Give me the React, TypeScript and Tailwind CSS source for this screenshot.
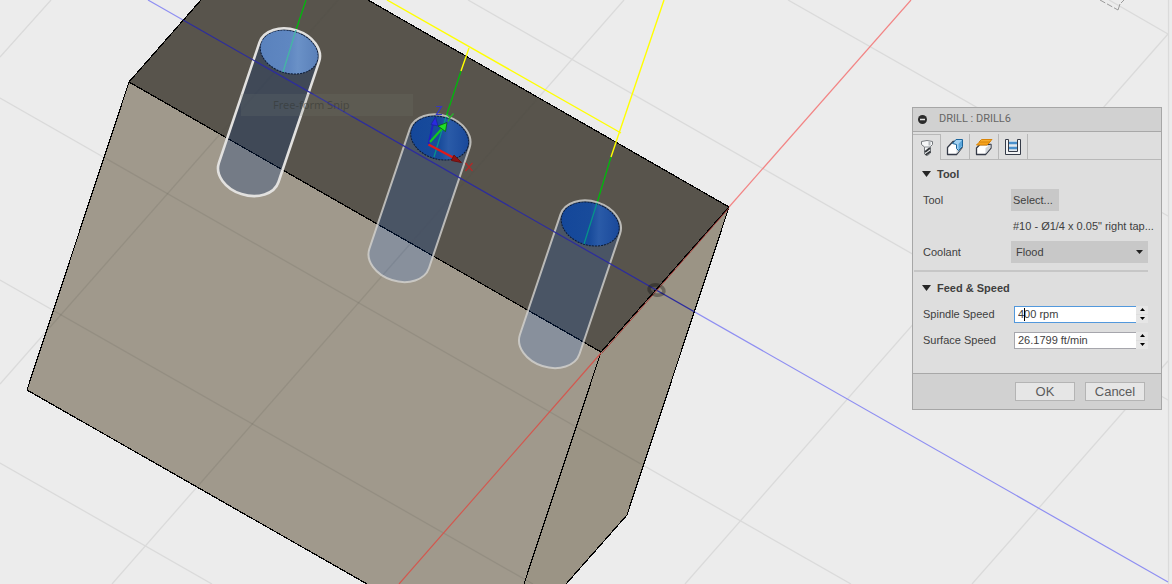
import React, { useState } from 'react';

const cylinderPath = 'M259.5 42.4A31.3 22.8 17 0 1 319.1 61.6L278.5 182A31.3 22.8 17 0 1 218.9 162.8Z';

const gridLines = [
  'M0 98L851 584',
  'M0 280L533 584',
  'M0 463L212 584',
  'M468 0L1168 400',
  'M788 0L1168 216',
  'M1109 0L1168 34',
  'M51 0L0 57',
  'M338 0L0 384',
  'M624 0L112 584',
  'M1168 34L685 584',
  'M1168 361L972 584',
];

const Cylinder: React.FC<{ x: number; y: number; active?: boolean }> = ({ x, y, active }) => (
  <g transform={`translate(${x} ${y})`}>
    <path d={cylinderPath} fill={active ? '#002e75' : '#005df5'} fillOpacity={active ? 0.27 : 0.15} />
    <ellipse
      cx="289.2"
      cy="52"
      rx="29.6"
      ry="21.2"
      transform="rotate(17 289.2 52)"
      fill={active ? 'url(#capActive)' : 'url(#cap)'}
      stroke="#0a1a38"
      strokeDasharray="2 1"
    />
    <path
      d={cylinderPath}
      fill="none"
      stroke={active ? '#e2e1df' : '#d5d3d0'}
      strokeOpacity={active ? 1 : 0.8}
      strokeWidth={active ? 2.6 : 2}
    />
  </g>
);

const Viewport: React.FC = () => (
  <svg
    className="absolute inset-0 h-full w-full"
    viewBox="0 0 1172 584"
    preserveAspectRatio="xMinYMin slice"
    aria-hidden="true"
  >
    <defs>
      <linearGradient id="cap" x1="0" y1="0.6" x2="1" y2="0.4">
        <stop offset="0" stopColor="#14479a" />
        <stop offset="0.5" stopColor="#184b9b" />
        <stop offset="0.65" stopColor="#2a5ba8" />
        <stop offset="1" stopColor="#19489a" />
      </linearGradient>
      <linearGradient id="capActive" x1="0" y1="0.6" x2="1" y2="0.4">
        <stop offset="0" stopColor="#5a82bd" />
        <stop offset="0.5" stopColor="#5f87c1" />
        <stop offset="0.65" stopColor="#6a91c7" />
        <stop offset="1" stopColor="#597fb8" />
      </linearGradient>
      <clipPath id="body">
        <path d="M201 0L129 82L27 390L367 584H566L627 515L729 207L368 0Z" />
      </clipPath>
    </defs>

    {/* Ground grid */}
    <g stroke="#dadada" strokeWidth="1.3" fill="none">
      {gridLines.map(d => <path key={d} d={d} />)}
      <path d="M1168.5 0V584" />
    </g>
    <path d="M148 0L1168 582" stroke="#8e8ef2" strokeWidth="1.2" />
    <path d="M911 0L729 207" stroke="#f28484" strokeWidth="1.2" />
    <g fill="none" stroke="#9a9a9a">
      <path d="M1100 0L1118 10" strokeDasharray="6 2" />
      <path d="M1118 10L1120 4M1121 3L1124 0" />
    </g>

    {/* Stock body */}
    <path d="M129 82L27 390L367 584H524L601 352Z" fill="#a0998c" />
    <path d="M601 352L524 584H566L627 515L729 207Z" fill="#9b9485" />
    <path d="M201 0L129 82L601 352L729 207L368 0Z" fill="#58544c" />
    <g clipPath="url(#body)">
      <g stroke="#505044" strokeOpacity="0.14" strokeWidth="1.3">
        {gridLines.map(d => <path key={d} d={d} />)}
      </g>
    </g>
    <g stroke="#000" strokeWidth="1.2" fill="none" shapeRendering="crispEdges">
      <path d="M201 0L129 82L27 390L367 584" />
      <path d="M566 584L627 515L729 207L368 0" />
      <path d="M129 82L601 352L729 207M601 352L524 584" />
    </g>

    {/* Holes */}
    <path d="M306 0L296 30M461 71L446 117M611 157L597 203" stroke="#00b80c" strokeWidth="1.3" />
    <Cylinder x={0} y={0} active />
    <Cylinder x={150.5} y={86} />
    <Cylinder x={301} y={172} />
    <path d="M296 30L283 72" stroke="#45b5a4" strokeWidth="1.3" />
    <path d="M446 117L434 157M597 203L584 244" stroke="#07928a" strokeWidth="1.3" />

    <g clipPath="url(#body)">
      <path d="M148 0L1168 582" stroke="#2c2c9e" strokeWidth="1.2" />
    </g>
    <path d="M729 208L602 353" stroke="#a43c38" />
    <path d="M601 353L399 584" stroke="#d2584f" strokeWidth="1.2" />
    <ellipse cx="656.5" cy="290" rx="7.6" ry="5" transform="rotate(12 656.5 290)" fill="none" stroke="#000" strokeOpacity="0.3" strokeWidth="3.6" />

    <path d="M387 0L621 133M664 0L611 157M469 48L461 71" fill="none" stroke="#ffff00" strokeWidth="1.4" />

    {/* Axis triad */}
    <g fill="none">
      <path d="M428.5 144L433 124" stroke="#2020c0" strokeWidth="1.8" />
      <path d="M435.5 117L438 126L431 124.5Z" fill="#2a2ae0" stroke="#1c1c90" strokeWidth="0.6" />
      <path d="M436 106.5H441.5L436.5 114.5H442" stroke="#3636c4" strokeWidth="1.2" />
      <path d="M430 142L443 127.5" stroke="#12c81c" strokeWidth="2.2" />
      <path d="M447 122.5L438 126L445.5 131.5Z" fill="#20e028" stroke="#0a5c10" strokeWidth="0.8" />
      <path d="M446.5 114L450 117.5L453.5 113.5M450 117.5L448 121.5" stroke="#24b82a" strokeWidth="1.2" />
      <path d="M428.5 144.5L455 158.5" stroke="#e01a1a" strokeWidth="2.2" />
      <path d="M454 155L461.5 162.5L451.5 160.5Z" fill="#8c1414" stroke="#6c1010" />
      <path d="M465.5 163L472.5 171M472.5 163L465.5 171" stroke="#b42828" strokeWidth="1.2" />
    </g>

    {/* Fading tool hint */}
    <rect x="241" y="94" width="172" height="22" fill="#7c8078" fillOpacity="0.16" />
    <text x="273" y="109" fontSize="11" fill="#30322f" fillOpacity="0.5" className="font-['Noto_Sans',sans-serif]">
      Free-form Snip
    </text>
  </svg>
);

const DrillIcon = () => (
  <svg width="18" height="18" viewBox="0 0 18 18" fill="none">
    <path d="M3.5 2.5Q9 0.5 14.500 2.5V5.5L12.500 7.5V14L9.5 16.500L6.5 15V8L3.5 5.5Z" fill="#f6f7f8" stroke="#74787c" />
    <path d="M11.5 2.5V6.5" stroke="#b4b8bc" strokeWidth="2" />
    <path d="M6.5 8H12.5" stroke="#8c9094" />
    <path d="M7 13L12 9M7.500 16L12.500 12.500" stroke="#34383c" strokeWidth="2" />
  </svg>
);

const GeometryIcon = () => (
  <svg width="18" height="18" viewBox="0 0 18 18" fill="none" strokeLinejoin="round">
    <path d="M1.5 9.5L7 3.5H16V9.5L10.5 16.5H1.5Z" fill="#fff" stroke="#353b48" strokeWidth="1.3" />
    <path d="M10.5 10V16L15.5 10V5Z" fill="#d4d8dc" />
    <path d="M6.5 5.5L10 1.5H16.5V8.5L12.5 12.5L10.5 10.5V6.5Z" fill="#a4d2f2" stroke="#1c659c" />
    <path d="M12.5 6V12L16 8V2Z" fill="#5ca6da" />
  </svg>
);

const HeightsIcon = () => (
  <svg width="18" height="18" viewBox="0 0 18 18" fill="none" strokeLinejoin="round">
    <path d="M1.5 10L5 6.5H16V10L10.5 16.5H1.5Z" fill="#fff" stroke="#353b48" strokeWidth="1.3" />
    <path d="M10.5 10V16L15.5 10V6.5Z" fill="#d0d4d8" />
    <path d="M1.5 7L5 3.5H15.5L12 7Z" fill="#f5a21c" stroke="#d88408" />
    <path d="M4 4L6.5 1.5H17L14.500 4Z" fill="#f8ac2c" stroke="#d88408" />
  </svg>
);

const PassesIcon = () => (
  <svg width="18" height="18" viewBox="0 0 18 18" fill="none">
    <path d="M5 3H13V13H5Z" fill="#e2e8ee" />
    <path d="M5 5H13M5 10H13" stroke="#4a90cc" strokeWidth="2.4" />
    <path d="M1.5 1.5H4.5V13.5H13.5V1.5H16.5V16.5H1.5Z" fill="#f2f3f4" stroke="#353b48" />
  </svg>
);

const tabs = [
  { name: 'Tool', icon: DrillIcon },
  { name: 'Geometry', icon: GeometryIcon },
  { name: 'Heights', icon: HeightsIcon },
  { name: 'Passes', icon: PassesIcon },
];

const SectionTitle: React.FC<{ children: React.ReactNode }> = ({ children }) => (
  <button type="button" className="flex h-7 items-center gap-[6px] pl-[9px] text-[11px] font-bold text-[#3f3f3f]">
    <svg width="9" height="6" viewBox="0 0 9 6" fill="#262626"><path d="M0 0H9L4.5 6Z" /></svg>
    {children}
  </button>
);

const SpinField: React.FC<{ id: string; label: string; initial: string; active?: boolean }> = ({ id, label, initial, active }) => {
  const [value, setValue] = useState(initial);

  return (
    <div className="flex h-[26px] items-center pl-[10px] pr-[13px]">
      <label htmlFor={id} className="w-[91px]">{label}</label>
      <div className="relative flex-1">
        <input
          id={id}
          type="text"
          value={value}
          onChange={e => setValue(e.target.value)}
          className={`block h-[17px] w-full border border-r-0 bg-white pl-[3px] leading-[15px] outline-none ${active ? 'border-[#5298dc]' : 'border-[#a6a6ac]'}`}
        />
        {active && <span className="absolute left-[10px] top-[2px] h-[13px] w-px bg-black" />}
      </div>
      <div className="flex w-3 flex-col gap-px">
        <button type="button" aria-label={`Increase ${label}`} className="flex h-2 items-center justify-center bg-[#e6e6e6]">
          <svg width="5" height="3" viewBox="0 0 5 3"><path d="M0 3H5L2.5 0Z" /></svg>
        </button>
        <button type="button" aria-label={`Decrease ${label}`} className="flex h-2 items-center justify-center bg-[#e6e6e6]">
          <svg width="5" height="3" viewBox="0 0 5 3"><path d="M0 0H5L2.5 3Z" /></svg>
        </button>
      </div>
    </div>
  );
};

const DrillPanel: React.FC = () => (
  <section className="relative w-[250px] border border-[#a6a6a6] bg-[#dedede] text-[11px] text-[#404040]">
    <header className="flex h-6 items-center gap-3 border-b border-[#a8a8a8] bg-[#d1d1d1] pl-[5px] text-[#666]">
      <button type="button" aria-label="Collapse panel">
        <svg width="9" height="9" viewBox="0 0 9 9">
          <circle cx="4.5" cy="4.5" r="4.5" fill="#2b2b2b" />
          <path d="M2 4.5H7" stroke="#e4e4e4" strokeWidth="1.5" />
        </svg>
      </button>
      <h2 className="font-[Roboto,sans-serif]">DRILL : DRILL6</h2>
    </header>

    <nav className="flex pt-[2px]">
      {tabs.map(({ name, icon: Icon }, i) => (
        <button
          key={name}
          type="button"
          aria-label={name}
          className={`flex h-[26px] items-center justify-center border-r border-[#b8b8b8] ${i === 0 ? 'w-7 border-t' : 'w-[29px] border-b'}`}
        >
          <Icon />
        </button>
      ))}
      <div className="flex-1 border-b border-[#b8b8b8]" />
    </nav>

    <div className="pb-[5px]">
      <SectionTitle>Tool</SectionTitle>
      <div className="-mt-px flex h-[26px] items-center pl-[10px] pr-[13px]">
        <span className="w-[88px]">Tool</span>
        <button type="button" className="h-[22px] bg-[#c8c8c8] pl-[2px] pr-[6px]">Select...</button>
      </div>
      <div className="flex h-[26px] items-center pl-[100px] pr-[13px]">
        <p className="whitespace-nowrap">#10 - Ø1/4 x 0.05" right tap...</p>
      </div>
      <div className="flex h-[26px] items-center pl-[10px] pr-[13px]">
        <label htmlFor="coolant" className="w-[88px]">Coolant</label>
        <div className="relative flex-1">
          <select id="coolant" defaultValue="Flood" className="block h-[22px] w-full appearance-none bg-[#c8c8c8] pl-[5px] outline-none">
            <option>Flood</option>
          </select>
          <svg className="pointer-events-none absolute right-[5px] top-[9px]" width="7" height="4" viewBox="0 0 7 4" fill="#222">
            <path d="M0 0H7L3.5 4Z" />
          </svg>
        </div>
      </div>
    </div>
    <hr className="ml-px mr-[13px] border-0 border-t-2 border-[#c6c6c6]" />

    <div className="pb-5 pt-[2px]">
      <SectionTitle>Feed &amp; Speed</SectionTitle>
      <div className="-mt-px">
        <SpinField id="spindle-speed" label="Spindle Speed" initial="400 rpm" active />
        <SpinField id="surface-speed" label="Surface Speed" initial="26.1799 ft/min" />
      </div>
    </div>

    <footer className="flex h-9 items-center justify-end gap-[10px] border-t border-[#a8a8a8] bg-[#d1d1d1] pr-4 text-[13px] text-[#5c5c5c]">
      <button type="button" className="h-[19px] w-[60px] border border-[#b4b4b4] bg-[#e6e6e6] leading-[17px]">OK</button>
      <button type="button" className="h-[19px] w-[60px] border border-[#b4b4b4] bg-[#e6e6e6] leading-[17px]">Cancel</button>
    </footer>
  </section>
);

const App: React.FC = () => {
  return (
    <main className="relative min-h-screen overflow-hidden bg-[#ececec] font-['Liberation_Sans',Arial,sans-serif]">
      <Viewport />
      <div className="flex justify-end pr-[10px] pt-[107px]">
        <DrillPanel />
      </div>
    </main>
  );
};

export default App;
